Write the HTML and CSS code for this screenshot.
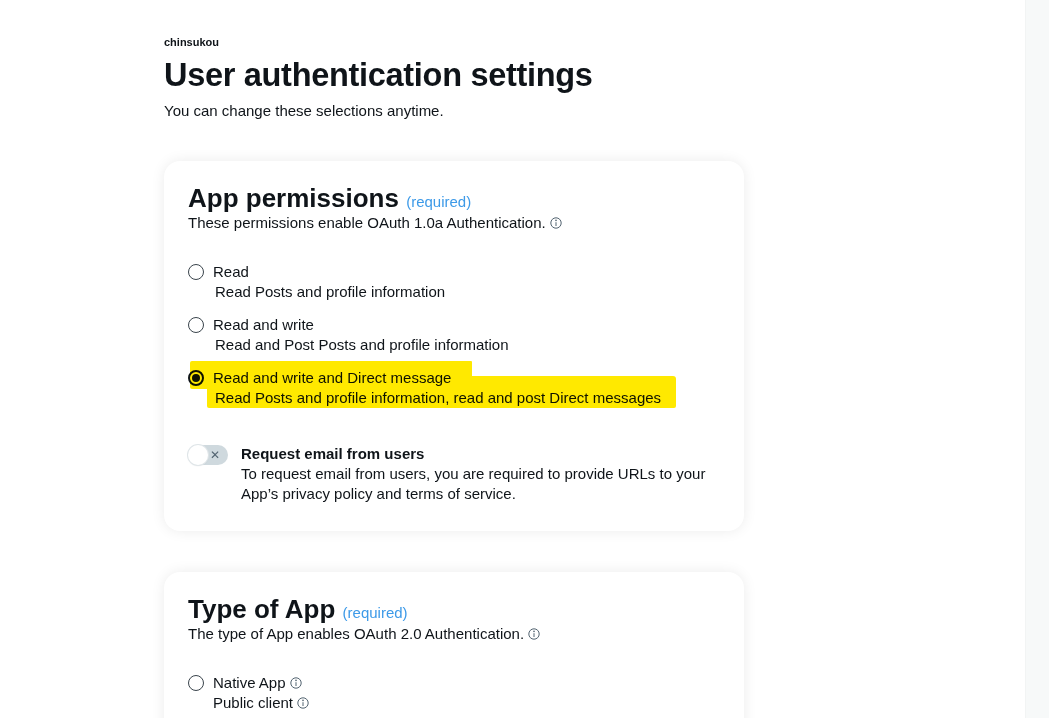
FILE: index.html
```html
<!DOCTYPE html>
<html lang="en">
<head>
<meta charset="utf-8">
<title>User authentication settings</title>
<link rel="stylesheet" href="styles.css">
</head>
<body>
<div class="page">
  <main class="main">
    <div class="app-name">chinsukou</div>
    <h1 class="title">User authentication settings</h1>
    <p class="subtitle">You can change these selections anytime.</p>

    <section class="card">
      <h2 class="card-title">App permissions <span class="req">(required)</span></h2>
      <p class="card-desc">These permissions enable OAuth 1.0a Authentication. <svg class="info" viewBox="0 0 12 12"><circle cx="6" cy="6" r="5.2"/><line x1="6" y1="5.2" x2="6" y2="9"/><circle class="dot" cx="6" cy="3.4" r="0.8"/></svg></p>

      <div class="options">
        <div class="option">
          <span class="radio"></span>
          <div class="opt-text">
            <div class="opt-label">Read</div>
            <div class="opt-desc shift">Read Posts and profile information</div>
          </div>
        </div>
        <div class="option">
          <span class="radio"></span>
          <div class="opt-text">
            <div class="opt-label">Read and write</div>
            <div class="opt-desc shift">Read and Post Posts and profile information</div>
          </div>
        </div>
        <div class="option highlighted">
          <span class="marks"><span class="mark mark-a"></span><span class="mark mark-b"></span></span>
          <span class="radio checked"></span>
          <div class="opt-text">
            <div class="opt-label">Read and write and Direct message</div>
            <div class="opt-desc shift">Read Posts and profile information, read and post Direct messages</div>
          </div>
        </div>
      </div>

      <div class="toggle-row">
        <span class="toggle"><span class="knob"></span><span class="x">✕</span></span>
        <div class="toggle-text">
          <div class="toggle-label">Request email from users</div>
          <div class="toggle-desc">To request email from users, you are required to provide URLs to your App’s privacy policy and terms of service.</div>
        </div>
      </div>
    </section>

    <section class="card">
      <h2 class="card-title">Type of App <span class="req">(required)</span></h2>
      <p class="card-desc">The type of App enables OAuth 2.0 Authentication. <svg class="info" viewBox="0 0 12 12"><circle cx="6" cy="6" r="5.2"/><line x1="6" y1="5.2" x2="6" y2="9"/><circle class="dot" cx="6" cy="3.4" r="0.8"/></svg></p>
      <div class="options">
        <div class="option">
          <span class="radio"></span>
          <div class="opt-text">
            <div class="opt-label">Native App <svg class="info" viewBox="0 0 12 12"><circle cx="6" cy="6" r="5.2"/><line x1="6" y1="5.2" x2="6" y2="9"/><circle class="dot" cx="6" cy="3.4" r="0.8"/></svg></div>
            <div class="opt-desc">Public client <svg class="info" viewBox="0 0 12 12"><circle cx="6" cy="6" r="5.2"/><line x1="6" y1="5.2" x2="6" y2="9"/><circle class="dot" cx="6" cy="3.4" r="0.8"/></svg></div>
          </div>
        </div>
      </div>
    </section>
  </main>
  <aside class="side"></aside>
</div>
</body>
</html>
```

FILE: styles.css
```css
* { box-sizing: border-box; }
html, body { margin: 0; padding: 0; height: 100%; overflow: hidden; }
body {
  font-family: "Liberation Sans", Arial, sans-serif;
  color: #0f1419;
  background: #ffffff;
}
.page { display: flex; height: 100%; }
.main {
  flex: 1;
  padding: 35px 0 0 164px;
}
.side {
  width: 24px;
  background: #f7f9f9;
  border-left: 1px solid #f2f4f4;
}
.app-name {
  font-size: 11px;
  font-weight: 700;
  line-height: 14px;
}
.title {
  margin: 7px 0 0;
  font-size: 32.5px;
  line-height: 38px;
  font-weight: 700;
  letter-spacing: -0.3px;
}
.subtitle {
  margin: 7px 0 0;
  font-size: 15px;
  line-height: 20px;
}
.card {
  width: 580px;
  margin-top: 40px;
  background: #fff;
  border-radius: 16px;
  box-shadow: 0 0 14px rgba(0, 0, 0, 0.08);
  padding: 23px 24px 27px;
}
.card + .card { margin-top: 41px; }
.card-title {
  margin: 0;
  height: 28px;
  font-size: 26px;
  line-height: 28px;
  font-weight: 700;
}
.req {
  font-size: 15px;
  line-height: 15px;
  font-weight: 400;
  color: #3d9ae8;
}
.card-desc {
  margin: 1px 0 0;
  font-size: 15px;
  line-height: 20px;
}
.info {
  width: 12px;
  height: 12px;
  vertical-align: -1px;
  fill: none;
  stroke: #536471;
  stroke-width: 1;
}
.info .dot { fill: #536471; stroke: none; }
.options {
  margin-top: 29px;
  display: flex;
  flex-direction: column;
  gap: 13px;
}
.option {
  position: relative;
  display: flex;
  align-items: flex-start;
  gap: 9px;
}
.radio {
  flex: none;
  width: 16px;
  height: 16px;
  margin-top: 2px;
  border: 1.5px solid #3a444c;
  border-radius: 50%;
  background: #fff;
  position: relative;
}
.radio.checked {
  border: 2px solid #0f1419;
}
.radio.checked::after {
  content: "";
  position: absolute;
  left: 2px; top: 2px;
  width: 8px; height: 8px;
  border-radius: 50%;
  background: #0f1419;
}
.opt-label, .opt-desc {
  font-size: 15px;
  line-height: 20px;
}
.opt-desc.shift { margin-left: 2px; }
.marks {
  position: absolute;
  left: 0; top: 0;
  width: 0; height: 0;
  mix-blend-mode: multiply;
  z-index: 2;
  pointer-events: none;
}
.mark {
  position: absolute;
  background: #ffe900;
}
.mark-a { left: 2px; top: -7px; width: 282px; height: 28px; border-radius: 2px 1px 0 2px; }
.mark-b { left: 19px; top: 8px; width: 469px; height: 32px; border-radius: 1px 3px 2px 2px; }
.toggle-row {
  margin-top: 36px;
  display: flex;
  align-items: flex-start;
  gap: 13px;
}
.toggle {
  flex: none;
  position: relative;
  width: 40px;
  height: 20px;
  margin-top: 1px;
  border-radius: 10px;
  background: #cfd9de;
}
.knob {
  position: absolute;
  left: 0; top: 0;
  width: 20px; height: 20px;
  border-radius: 50%;
  background: #fff;
  box-shadow: 0 0 0 1px #dfe5e8, 0 1px 2px rgba(0,0,0,0.08);
}
.x {
  position: absolute;
  left: 22px; top: 2px;
  font-size: 12px;
  line-height: 16px;
  color: #536471;
}
.toggle-label {
  font-size: 15px;
  line-height: 20px;
  font-weight: 700;
}
.toggle-desc {
  font-size: 15px;
  line-height: 20px;
  width: 470px;
}
```
